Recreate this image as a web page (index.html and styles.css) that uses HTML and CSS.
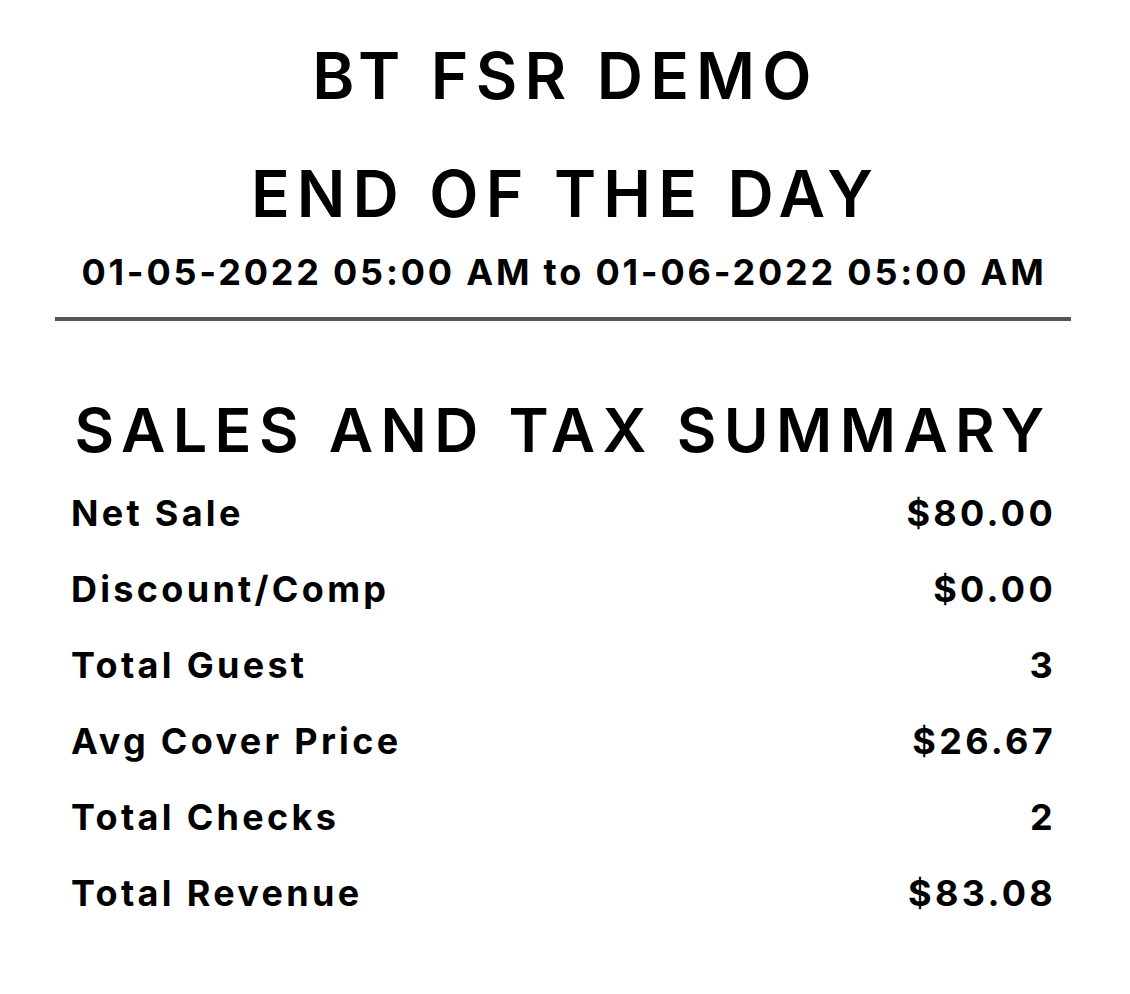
FILE: index.html
```html
<!DOCTYPE html>
<html lang="en">
<head>
<meta charset="utf-8">
<title>BT FSR DEMO - End of the Day</title>
<link rel="stylesheet" href="styles.css">
</head>
<body>
<main class="report">
  <header class="report-header">
    <h1 class="title">BT FSR DEMO</h1>
    <h2 class="title title-second">END OF THE DAY</h2>
    <p class="range">01-05-2022 05:00 AM to 01-06-2022 05:00 AM</p>
  </header>
  <section class="summary">
    <h3 class="section-title">SALES AND TAX SUMMARY</h3>
    <ul class="rows">
      <li class="row"><span>Net Sale</span><span>$80.00</span></li>
      <li class="row"><span>Discount/Comp</span><span>$0.00</span></li>
      <li class="row"><span>Total Guest</span><span>3</span></li>
      <li class="row"><span>Avg Cover Price</span><span>$26.67</span></li>
      <li class="row"><span>Total Checks</span><span>2</span></li>
      <li class="row"><span>Total Revenue</span><span>$83.08</span></li>
    </ul>
  </section>
</main>
</body>
</html>
```
FILE: styles.css
```css
html, body {
  margin: 0;
  padding: 0;
  background: #fff;
}
body {
  font-family: "Inter", "Liberation Sans", sans-serif;
  color: #000;
}
.report {
  width: 1016px;
  margin: 0 0 0 55px;
  padding-top: 17px;
}
.report-header {
  border-bottom: 4px solid #555;
  padding-bottom: 25px;
}
.title {
  margin: 0;
  font-size: 64px;
  line-height: 118px;
  font-weight: 600;
  letter-spacing: 7.2px;
  text-indent: 5px;
  text-align: center;
  white-space: nowrap;
}
.title-second {
  line-height: 118px;
}
.range {
  margin: -1px 0 0;
  font-size: 36px;
  line-height: 40px;
  font-weight: 700;
  text-align: center;
  letter-spacing: 2.8px;
  text-indent: 2px;
  white-space: nowrap;
}
.section-title {
  margin: 69px 0 5px;
  font-size: 61px;
  line-height: 80px;
  font-weight: 600;
  letter-spacing: 7.4px;
  text-indent: 0;
  text-align: center;
  white-space: nowrap;
}
.rows {
  list-style: none;
  margin: 0;
  padding: 0 15px 0 16px;
}
.row {
  display: flex;
  justify-content: space-between;
  font-size: 36px;
  line-height: 76px;
  font-weight: 700;
  letter-spacing: 3.3px;
}
```
